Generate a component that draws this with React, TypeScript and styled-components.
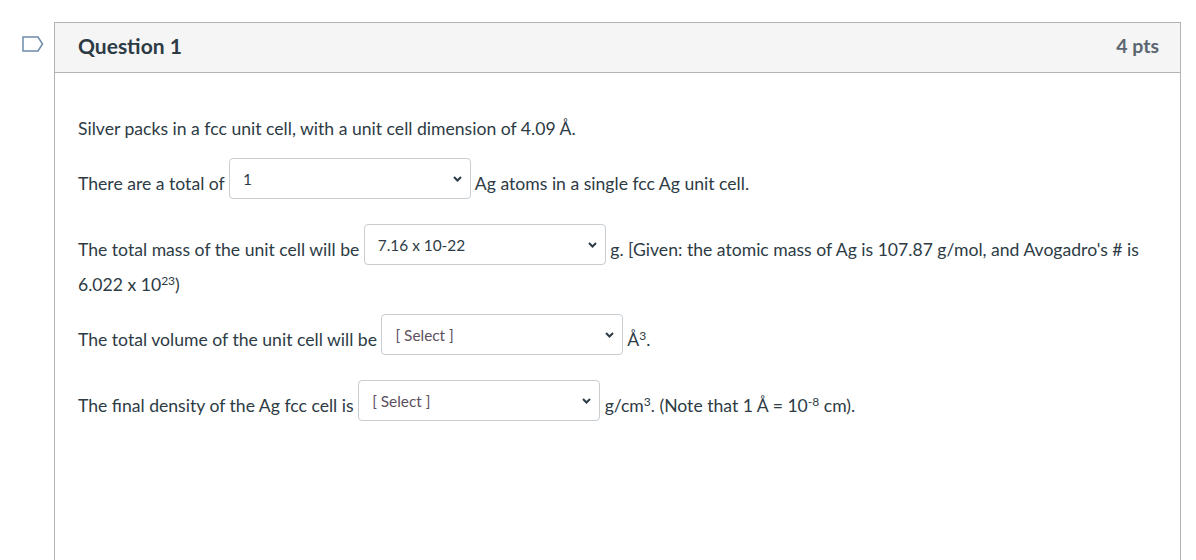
import React from "react";
import styled, { createGlobalStyle } from "styled-components";

const GlobalStyle = createGlobalStyle`
  html, body {
    margin: 0;
    padding: 0;
    background: #ffffff;
  }
  body {
    font-family: Lato, "Noto Sans", sans-serif;
    color: #2d3b45;
  }
`;

const Page = styled.div`
  display: flex;
  align-items: flex-start;
  padding-top: 22px;
  width: 1196px;
  height: 560px;
  overflow: hidden;
  box-sizing: border-box;
`;

const FlagColumn = styled.div`
  width: 54px;
  flex: none;
  display: flex;
  justify-content: flex-start;
  padding: 14px 0 0 22px;
  box-sizing: border-box;
`;

const Card = styled.div`
  width: 1127px;
  min-height: 620px;
  border: 1px solid #b3b3b3;
  box-sizing: border-box;
`;

const Header = styled.div`
  display: flex;
  align-items: center;
  justify-content: space-between;
  height: 50px;
  padding: 0 21px 4px 23px;
  background: #f5f5f5;
  border-bottom: 1px solid #b3b3b3;
  box-sizing: border-box;
`;

const Title = styled.h2`
  margin: 0;
  font-size: 21px;
  font-weight: 700;
  color: #2d3b45;
`;

const Points = styled.span`
  font-size: 19.5px;
  font-weight: 700;
  color: #5b6670;
`;

const Body = styled.div`
  padding: 44px 23px 0 23px;
  font-size: 17.6px;
  line-height: 24px;
`;

const Para = styled.p`
  margin: 0 0 17px 0;
`;

const Sup = styled.sup`
  font-size: 12px;
  line-height: 0;
  vertical-align: 6px;
`;

const SelectBox = styled.span`
  display: inline-flex;
  align-items: center;
  justify-content: space-between;
  width: 242px;
  height: 41px;
  margin-bottom: 8px;
  padding: 0 8px 0 13px;
  border: 1px solid #c7cdd1;
  border-radius: 4px;
  box-sizing: border-box;
  vertical-align: 5px;
  background: #ffffff;
`;

const SelectText = styled.span<{ $placeholder?: boolean }>`
  font-size: 15.4px;
  line-height: 20px;
  color: ${(p) => (p.$placeholder ? "#5d5060" : "#2d3b45")};
`;

const Chevron = () => (
  <svg width="9" height="6" viewBox="0 0 9 6" aria-hidden="true">
    <path d="M1 1 L4.5 4.5 L8 1" fill="none" stroke="#2d3b45" strokeWidth="2" />
  </svg>
);

const Dropdown = ({ value, placeholder }: { value: string; placeholder?: boolean }) => (
  <SelectBox>
    <SelectText $placeholder={placeholder}>{value}</SelectText>
    <Chevron />
  </SelectBox>
);

const Flag = () => (
  <svg width="22" height="16" viewBox="0 0 22 16" aria-hidden="true">
    <path d="M1 1 H16 L20.5 8 L16 15 H1 Z" fill="none" stroke="#6d8bab" strokeWidth="1.5" />
  </svg>
);

export default function App() {
  return (
    <>
      <GlobalStyle />
      <Page>
        <FlagColumn>
          <Flag />
        </FlagColumn>
        <Card>
          <Header>
            <Title>Question 1</Title>
            <Points>4 pts</Points>
          </Header>
          <Body>
            <Para>Silver packs in a fcc unit cell, with a unit cell dimension of 4.09 Å.</Para>
            <Para>
              There are a total of <Dropdown value="1" /> Ag atoms in a single fcc Ag unit cell.
            </Para>
            <Para>
              The total mass of the unit cell will be <Dropdown value="7.16 x 10-22" /> g. [Given: the
              atomic mass of Ag is 107.87 g/mol, and Avogadro's # is 6.022 x 10<Sup>23</Sup>)
            </Para>
            <Para>
              The total volume of the unit cell will be <Dropdown value="[ Select ]" placeholder /> Å
              <Sup>3</Sup>.
            </Para>
            <Para>
              The final density of the Ag fcc cell is <Dropdown value="[ Select ]" placeholder /> g/cm
              <Sup>3</Sup>. (Note that 1 Å = 10<Sup>-8</Sup> cm).
            </Para>
          </Body>
        </Card>
      </Page>
    </>
  );
}
